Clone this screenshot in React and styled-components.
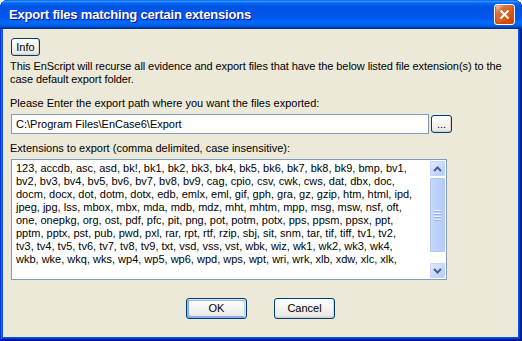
import React from 'react';
import styled, { createGlobalStyle } from 'styled-components';

const Global = createGlobalStyle`
    html, body {
        margin: 0;
        padding: 0;
        background: #ffffff;
    }
    body {
        font-family: "Liberation Sans", Arial, sans-serif;
        font-size: 11px;
        color: #000;
    }
`

const Window = styled.div`
    width: 522px;
    height: 341px;
    box-sizing: border-box;
    display: flex;
    flex-direction: column;
    background: #0054e3;
    border-radius: 8px 8px 0 0;
    overflow: hidden;
    box-shadow: inset -1px -1px #00138c, inset 1px 1px #0831d9, inset -2px -2px #001ea0,
        inset 2px 2px #166aee, inset -3px -3px #003bda, inset 3px 3px #0855dd;
`

const TitleBar = styled.div`
    height: 29px;
    flex-shrink: 0;
    display: flex;
    align-items: center;
    justify-content: space-between;
    padding: 0 7px 1px 9px;
    box-sizing: border-box;
    border-radius: 8px 8px 0 0;
    background: linear-gradient(180deg, #0058ee 0%, #3593ff 4%, #288eff 6%, #127dff 8%,
        #036ffc 10%, #0262ee 14%, #0057e5 20%, #0054e3 24%, #0055eb 56%, #005bf5 66%,
        #026afe 76%, #0062ef 86%, #0052d6 92%, #0040ab 94%, #003092 100%);
`

const Title = styled.span`
    color: #fff;
    font-family: "Liberation Sans", Arial, sans-serif;
    font-weight: bold;
    font-size: 13px;
    text-shadow: 1px 1px #0f1089;
    letter-spacing: -0.2px;
`

const CloseButton = styled.div`
    width: 21px;
    height: 21px;
    box-sizing: border-box;
    border: 1px solid #fff;
    border-radius: 3px;
    display: flex;
    align-items: center;
    justify-content: center;
    background: radial-gradient(circle at 90% 90%, #cc4600 0%, #dc6527 55%, #cd7546 70%, #ffccb2 90%, #fff 100%);
    box-shadow: inset 0 -1px 2px 1px #da4600;
`

const Body = styled.div`
    flex: 1;
    margin: 0 4px 4px 3px;
    background: #ece9d8;
    padding: 9px 0 0 8px;
    display: flex;
    flex-direction: column;
    align-items: flex-start;
`

const XpButton = styled.button`
    box-sizing: border-box;
    width: ${p => p.$w}px;
    height: ${p => p.$h}px;
    padding: 0;
    font-family: "Liberation Sans", Arial, sans-serif;
    font-size: 11px;
    color: #000;
    border: 1px solid #003c74;
    border-radius: 3px;
    background: linear-gradient(180deg, #fff, #ecebe6 86%, #d6d0c5);
    box-shadow: ${p => p.$default
        ? 'inset -1px 1px #cee7ff, inset 1px 2px #98b8ea, inset -2px 2px #bcd4f6, inset 1px -1px #89ade4, inset 2px -2px #89ade4'
        : 'inset -1px -1px #d6d0c5'};
    line-height: 1;
`

const Text = styled.div`
    line-height: 13px;
    white-space: nowrap;
    margin-top: ${p => p.$mt || 0}px;
    margin-left: -1px;
    letter-spacing: ${p => p.$tight ? '-0.08px' : '0'};
`

const PathRow = styled.div`
    display: flex;
    align-items: center;
    gap: 2px;
    margin-top: 4px;
`

const PathInput = styled.div`
    width: 418px;
    height: 20px;
    box-sizing: border-box;
    border: 1px solid #7f9db9;
    background: #fff;
    padding: 0 4px;
    display: flex;
    align-items: center;
`

const ExtBox = styled.div`
    margin-top: 4px;
    width: 436px;
    height: 121px;
    box-sizing: border-box;
    border: 1px solid #7f9db9;
    background: #fff;
    display: flex;
`

const ExtText = styled.div`
    flex: 1;
    padding: 2px 4px;
    line-height: 13px;
    white-space: nowrap;
    overflow: hidden;
`

const ScrollBar = styled.div`
    width: 17px;
    display: flex;
    flex-direction: column;
    background: #fefefb;
`

const Arrow = styled.div`
    height: 17px;
    box-sizing: border-box;
    border: 1px solid #fff;
    border-radius: 2px;
    background: linear-gradient(135deg, #e4edff 0%, #c4d6fc 60%, #b3c9f8 100%);
    box-shadow: inset 0 0 0 1px #c3d3fd;
    display: flex;
    align-items: center;
    justify-content: center;
`

const Thumb = styled.div`
    height: 76px;
    box-sizing: border-box;
    border: 1px solid #fff;
    border-radius: 2px;
    background: linear-gradient(90deg, #c8d9fd 0%, #bccffb 50%, #b8ccf9 100%);
    box-shadow: inset 0 0 0 1px #b3c8f6;
    display: flex;
    flex-direction: column;
    align-items: center;
    justify-content: center;
    gap: 1px;
`

const Grip = styled.div`
    width: 7px;
    height: 1px;
    background: #eef4fe;
    border-bottom: 1px solid #8cb0f8;
`

const Track = styled.div`
    flex: 1;
`

const ButtonRow = styled.div`
    align-self: stretch;
    margin: 18px 8px 0 0;
    display: flex;
    justify-content: center;
    gap: 27px;
`

const lines = [
    '123, accdb, asc, asd, bk!, bk1, bk2, bk3, bk4, bk5, bk6, bk7, bk8, bk9, bmp, bv1,',
    'bv2, bv3, bv4, bv5, bv6, bv7, bv8, bv9, cag, cpio, csv, cwk, cws, dat, dbx, doc,',
    'docm, docx, dot, dotm, dotx, edb, emlx, eml, gif, gph, gra, gz, gzip, htm, html, ipd,',
    'jpeg, jpg, lss, mbox, mbx, mda, mdb, mdz, mht, mhtm, mpp, msg, msw, nsf, oft,',
    'one, onepkg, org, ost, pdf, pfc, pit, png, pot, potm, potx, pps, ppsm, ppsx, ppt,',
    'pptm, pptx, pst, pub, pwd, pxl, rar, rpt, rtf, rzip, sbj, sit, snm, tar, tif, tiff, tv1, tv2,',
    'tv3, tv4, tv5, tv6, tv7, tv8, tv9, txt, vsd, vss, vst, wbk, wiz, wk1, wk2, wk3, wk4,',
    'wkb, wke, wkq, wks, wp4, wp5, wp6, wpd, wps, wpt, wri, wrk, xlb, xdw, xlc, xlk,',
];

const Chevron = ({ up }) => (
    <svg width="9" height="6" viewBox="0 0 9 6">
        <path d={up ? 'M1 5 L4.5 1.5 L8 5' : 'M1 1 L4.5 4.5 L8 1'} fill="none" stroke="#4d6185" strokeWidth="2" />
    </svg>
);

const App = () => {
    return <>
        <Global />
        <Window>
            <TitleBar>
                <Title>Export files matching certain extensions</Title>
                <CloseButton>
                    <svg width="11" height="11" viewBox="0 0 11 11">
                        <path d="M1.5 1.5 L9.5 9.5 M9.5 1.5 L1.5 9.5" stroke="#fff" strokeWidth="2" />
                    </svg>
                </CloseButton>
            </TitleBar>
            <Body>
                <XpButton $w={29} $h={18}>Info</XpButton>
                <Text $mt={4} $tight>
                    This EnScript will recurse all evidence and export files that have the below listed file extension(s) to the<br />
                    case default export folder.
                </Text>
                <Text $mt={11}>Please Enter the export path where you want the files exported:</Text>
                <PathRow>
                    <PathInput>C:\Program Files\EnCase6\Export</PathInput>
                    <XpButton $w={21} $h={18}>...</XpButton>
                </PathRow>
                <Text $mt={8}>Extensions to export (comma delimited, case insensitive):</Text>
                <ExtBox>
                    <ExtText>
                        {lines.map((line) => <div key={line}>{line}</div>)}
                    </ExtText>
                    <ScrollBar>
                        <Arrow><Chevron up /></Arrow>
                        <Thumb><Grip /><Grip /><Grip /><Grip /></Thumb>
                        <Track />
                        <Arrow><Chevron /></Arrow>
                    </ScrollBar>
                </ExtBox>
                <ButtonRow>
                    <XpButton $w={61} $h={21} $default>OK</XpButton>
                    <XpButton $w={61} $h={21}>Cancel</XpButton>
                </ButtonRow>
            </Body>
        </Window>
    </>
}

export default App;
